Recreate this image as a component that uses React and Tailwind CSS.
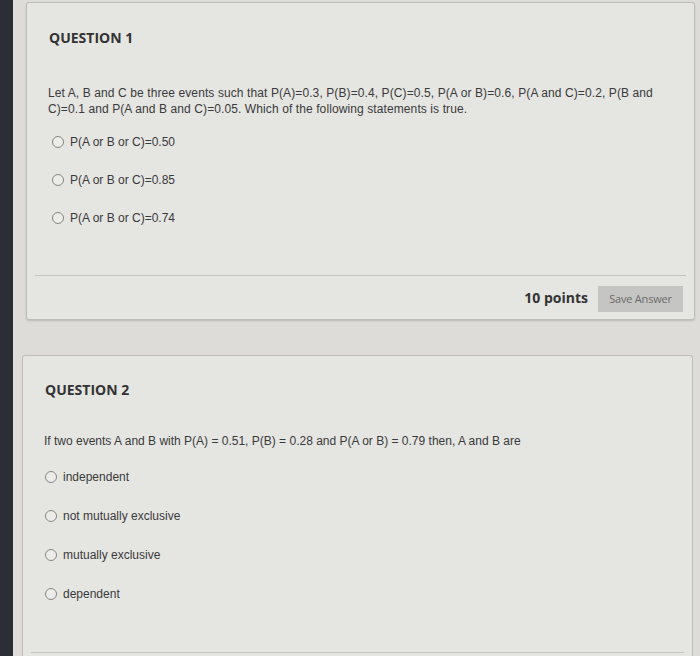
import React from "react";

const questions = [
  {
    title: "QUESTION 1",
    text: "Let A, B and C be three events such that P(A)=0.3, P(B)=0.4, P(C)=0.5, P(A or B)=0.6, P(A and C)=0.2, P(B and C)=0.1 and P(A and B and C)=0.05. Which of the following statements is true.",
    options: ["P(A or B or C)=0.50", "P(A or B or C)=0.85", "P(A or B or C)=0.74"],
  },
  {
    title: "QUESTION 2",
    text: "If two events A and B with P(A) = 0.51, P(B) = 0.28 and P(A or B) = 0.79 then, A and B are",
    options: ["independent", "not mutually exclusive", "mutually exclusive", "dependent"],
  },
];

const Radio = ({ label }) => (
  <label className="flex items-center gap-[6px] h-[20px] cursor-pointer">
    <span className="w-[12px] h-[12px] rounded-full border-[1.5px] border-[#858583] bg-[#ecece9] shrink-0" />
    <span className="text-[12px] text-[#3a3a3a]">{label}</span>
  </label>
);

const App = () => {
  const q1 = questions[0];
  const q2 = questions[1];

  return (
    <div
      className="w-[700px] h-[656px] overflow-hidden flex bg-[#dddcd9]"
      style={{ fontFamily: '"Liberation Sans", Arial, sans-serif' }}
    >
      <div className="w-[13px] shrink-0 bg-[#2b2e34]" />
      <div className="flex-1 flex flex-col pl-[13px] pr-[5px]">
        {/* question 1 */}
        <div className="mt-[2px] h-[318px] bg-[#e5e5e2] border border-[#bdbdba] rounded-[3px] shadow-[0_1px_2px_rgba(0,0,0,0.15)] flex flex-col">
          <h2
            className="mt-[25px] ml-[22px] text-[14px] leading-[20px] font-bold text-[#333]"
            style={{ fontFamily: '"Open Sans", sans-serif' }}
          >
            {q1.title}
          </h2>
          <p className="mt-[37px] ml-[21px] max-w-[630px] text-[12px] leading-[16px] text-[#3a3a3a] tracking-[0.1px]">
            {q1.text}
          </p>
          <div className="mt-[15px] ml-[25px] flex flex-col gap-[18px]">
            {q1.options.map((o) => (
              <Radio key={o} label={o} />
            ))}
          </div>
          <div className="mt-[47px] mx-[8px] border-t border-[#c4c4c1]" />
          <div className="flex items-center justify-end gap-[10px] mt-[10px] pr-[11px]">
            <span
              className="text-[14px] font-bold text-[#333] -mt-[3px]"
              style={{ fontFamily: '"Open Sans", sans-serif' }}
            >
              10 points
            </span>
            <button
              className="w-[85px] h-[26px] bg-[#c5c5c3] text-[11px] text-[#6a6a6a] tracking-[-0.2px]"
              style={{ fontFamily: '"Open Sans", sans-serif' }}
            >
              Save Answer
            </button>
          </div>
        </div>

        {/* question 2 */}
        <div className="mt-[35px] -ml-[4px] mr-[2px] flex-1 bg-[#e5e5e2] border border-[#bdbdba] border-b-0 rounded-t-[3px] flex flex-col">
          <h2
            className="mt-[24px] ml-[22px] text-[14px] leading-[20px] font-bold text-[#333]"
            style={{ fontFamily: '"Open Sans", sans-serif' }}
          >
            {q2.title}
          </h2>
          <p className="mt-[33px] ml-[21px] text-[12px] leading-[16px] text-[#3a3a3a]">
            {q2.text}
          </p>
          <div className="mt-[18px] ml-[22px] flex flex-col gap-[19px]">
            {q2.options.map((o) => (
              <Radio key={o} label={o} />
            ))}
          </div>
          <div className="mt-auto mb-[3px] mx-[8px] border-t border-[#c4c4c1]" />
        </div>
      </div>
    </div>
  );
};

export default App;
